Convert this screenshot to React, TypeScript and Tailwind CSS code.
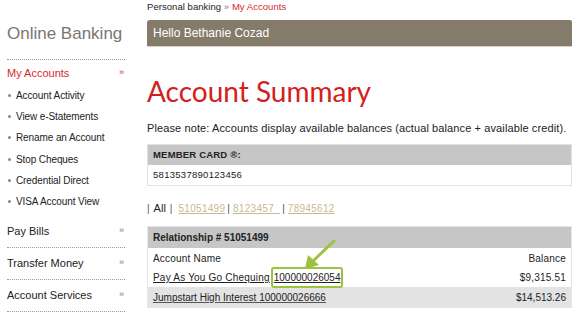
import React from 'react';

const subItems = [
  'Account Activity',
  'View e-Statements',
  'Rename an Account',
  'Stop Cheques',
  'Credential Direct',
  'VISA Account View',
];

const sections = ['Pay Bills', 'Transfer Money', 'Account Services'];

function Dotted() {
  return <div className="h-px w-full border-t border-dotted border-[#9a9a9a]" />;
}

export default function App() {
  return (
    <div className="flex w-[580px] h-[319px] bg-white overflow-hidden text-[#222] font-['Liberation_Sans',Arial,sans-serif]">
      {/* Sidebar */}
      <div className="w-[147px] flex-shrink-0 pl-[7px] pr-[22px]">
        <h1 className="pt-[24px] h-[44px] text-[17px] leading-[20px] text-[#7b7570]">Online Banking</h1>
        <div className="mt-[15px]"><Dotted /></div>
        <div className="flex items-center justify-between h-[14px] mt-[6px] text-[11px] text-[#d42a2a]">
          <span>My Accounts</span>
          <span className="text-[9px] pr-[1px]">»</span>
        </div>
        <ul className="mt-[5px]">
          {subItems.map(s => (
            <li key={s} className="flex items-center gap-[5px] h-[21.2px] text-[10px] tracking-[-0.01em] text-[#222]">
              <span className="w-[3px] h-[3px] rounded-full bg-[#888] ml-[1px]" />
              <span>{s}</span>
            </li>
          ))}
        </ul>
        <div className="mt-[12px]">
          {sections.map(s => (
            <div key={s}>
              <div className="flex items-center justify-between h-[14px] mb-[9px] text-[11px] text-[#222]">
                <span>{s}</span>
                <span className="text-[9px] text-[#777] pr-[1px]">»</span>
              </div>
              <div className="mb-[8px]"><Dotted /></div>
            </div>
          ))}
        </div>
      </div>

      {/* Main */}
      <div className="w-[425px] flex-shrink-0 relative">
        <div className="h-[14px] pt-[1px] text-[9.5px] leading-[12px] tracking-[0.005em]">
          Personal banking <span className="text-[#777]">»</span> <span className="text-[#d42a2a]">My Accounts</span>
        </div>
        <div className="mt-[6px] h-[27px] bg-[#857b6b] rounded-tl-[3px] rounded-tr-[2px] border-b border-[#d8d2c8] flex items-center px-[6px] text-[12px] text-white">
          Hello Bethanie Cozad
        </div>

        <h2 className="mt-[28px] text-[28px] leading-[32px] text-[#d4201c] font-['Lato','Open_Sans',sans-serif]">
          Account Summary
        </h2>

        <p className="mt-[15px] text-[11px] leading-[12px] tracking-[0.01em] text-[#222]">
          Please note: Accounts display available balances (actual balance + available credit).
        </p>

        <div className="mt-[10px] border border-[#e2e2e2]">
          <div className="h-[20px] bg-[#c6c6c6] flex items-center px-[5px] text-[9.5px] font-bold tracking-[0.02em]">
            MEMBER CARD ®:
          </div>
          <div className="h-[20px] flex items-center px-[5px] text-[9.5px] tracking-[0.03em]">5813537890123456</div>
        </div>

        <div className="mt-[15px] h-[14px] flex items-center text-[10px] text-[#555]">
          <span>|</span>
          <span className="text-[#222] text-[11px] ml-[4px]">All</span>
          <span className="ml-[4px]">|</span>
          <span className="ml-[6px] text-[#cbb994] underline tracking-[0.03em]">51051499</span>
          <span className="ml-[2px]">|</span>
          <span className="ml-[3px] text-[#cbb994] underline tracking-[0.03em]">8123457&nbsp;&nbsp;</span>
          <span className="ml-[2px]">|</span>
          <span className="ml-[3px] text-[#cbb994] underline tracking-[0.03em]">78945612</span>
        </div>

        <div className="mt-[11px] border border-[#e6e6e6] text-[10px]">
          <div className="h-[21px] bg-[#c6c6c6] flex items-center px-[5px] font-bold">
            Relationship # 51051499
          </div>
          <div className="h-[20px] flex items-center justify-between px-[5px] tracking-[0.02em]">
            <span>Account Name</span>
            <span>Balance</span>
          </div>
          <div className="h-[19px] flex items-center justify-between px-[5px] tracking-[0.02em]">
            <span className="flex items-center">
              <span className="underline">Pay As You Go Chequing</span>
              <span className="ml-[1px] px-[1px] h-[21px] flex items-center border-2 border-[#9dc23f] rounded-[3px] underline tracking-normal">100000026054</span>
            </span>
            <span>$9,315.51</span>
          </div>
          <div className="h-[20px] bg-[#e3e3e3] flex items-center justify-between px-[5px]">
            <span className="underline decoration-[#555]">Jumpstart High Interest 100000026666</span>
            <span>$14,513.26</span>
          </div>
        </div>

        {/* callout arrow */}
        <svg className="absolute left-[155px] top-[238px]" width="36" height="34" viewBox="0 0 36 34">
          <line x1="32" y1="3" x2="11" y2="23" stroke="#9dc23f" strokeWidth="3" strokeLinecap="round" />
          <polygon points="3,31 6,17 17,27" fill="#9dc23f" />
        </svg>
      </div>
    </div>
  );
}
